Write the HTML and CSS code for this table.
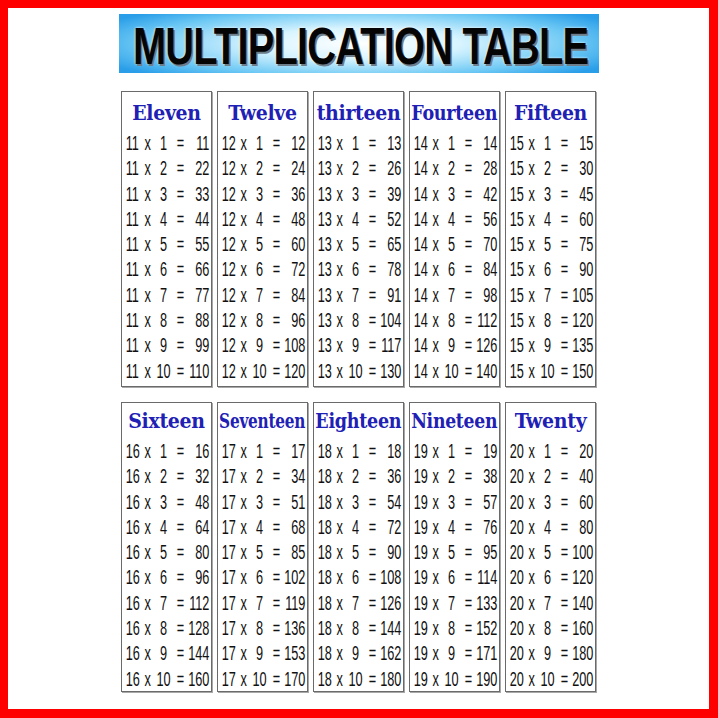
FILE: index.html
```html
<!DOCTYPE html>
<html>
<head>
<meta charset="utf-8">
<link rel="stylesheet" href="styles.css">
</head>
<body>
<div class="frame">
  <div class="banner"><h1 class="title">MULTIPLICATION TABLE</h1></div>
  <div class="grid" id="grid"></div>
</div>
<script src="app.js"></script>
</body>
</html>
```
FILE: styles.css
```css
* { box-sizing: border-box; margin: 0; padding: 0; }
html, body { width: 718px; height: 718px; background: #fff; }
body { margin: 0; font-family: "Liberation Sans", Arial, sans-serif; }
.frame {
  width: 718px; height: 718px;
  border: 8px solid #fe0000;
  border-right-width: 9px;
  border-bottom-width: 9px;
  background: #fff;
  display: flex; flex-direction: column; align-items: center;
  padding-top: 6px;
}
.banner {
  width: 480px; height: 59px;
  background: radial-gradient(ellipse 60% 75% at 50% 50%, #ffffff 0%, #d8f4ff 35%, #6cc8f4 75%, #2a9ee8 100%);
  display: flex; align-items: center; justify-content: center;
  margin-left: 1px;
  overflow: hidden;
}
.title {
  font-family: "Liberation Sans", Arial, sans-serif;
  font-weight: bold;
  font-size: 52px;
  letter-spacing: -1px;
  color: #050505;
  text-shadow: 2px 2px 0 #6d7d8a, 0 0 3px #fff;
  line-height: 1;
  padding-top: 4px;
  white-space: nowrap;
  transform: scaleX(0.765);
  margin-left: 4px;
}
.grid {
  margin-top: 18px;
  display: grid;
  grid-template-columns: repeat(5, 91px);
  column-gap: 5px;
  row-gap: 15px;
}
.box {
  border: 1px solid #6a6a6a;
  box-shadow: 1px 1px 0 #a8a8a8;
  background: #fff;
  padding-bottom: 3px;
}
.box.lower { padding-bottom: 0; }
.head {
  height: 38px;
  padding-top: 3px;
  display: flex; align-items: center; justify-content: center;
  font-family: "DejaVu Serif", serif;
  font-weight: bold;
  font-stretch: condensed;
  font-size: 21px;
  color: #2020b4;
  letter-spacing: -0.3px;
  white-space: nowrap;
}
.box.lower .head { height: 35px; padding-top: 1px; }
.head span { display: inline-block; }
.row {
  width: 144px;
  display: grid;
  grid-template-columns: 27px 16.5px 35px 19.5px 1fr;
  padding: 0 3px 0 6px;
  height: 25.3px;
  line-height: 25.3px;
  font-size: 20.5px;
  color: #111;
  white-space: nowrap;
  transform: scaleX(0.62);
  transform-origin: 0 50%;
}
.row span { text-align: center; }
.row .n { text-align: left; }
.row .r { text-align: right; }
```
FILE: app.js
```js
const names = ["Eleven","Twelve","thirteen","Fourteen","Fifteen","Sixteen","Seventeen","Eighteen","Nineteen","Twenty"];
const grid = document.getElementById("grid");
const heads = [];
for (let i = 0; i < 10; i++) {
  const n = 11 + i;
  const box = document.createElement("div");
  box.className = "box" + (i >= 5 ? " lower" : "");
  const h = document.createElement("div");
  h.className = "head";
  const s = document.createElement("span");
  s.textContent = names[i];
  h.appendChild(s);
  heads.push(s);
  box.appendChild(h);
  for (let m = 1; m <= 10; m++) {
    const r = document.createElement("div");
    r.className = "row";
    r.innerHTML = `<span class="n">${n}</span><span class="x">x</span><span>${m}</span><span>=</span><span class="r">${n*m}</span>`;
    box.appendChild(r);
  }
  grid.appendChild(box);
}
heads.forEach(s => {
  const w = s.getBoundingClientRect().width;
  if (w > 86) s.style.transform = `scaleX(${(86 / w).toFixed(3)})`;
});
```
